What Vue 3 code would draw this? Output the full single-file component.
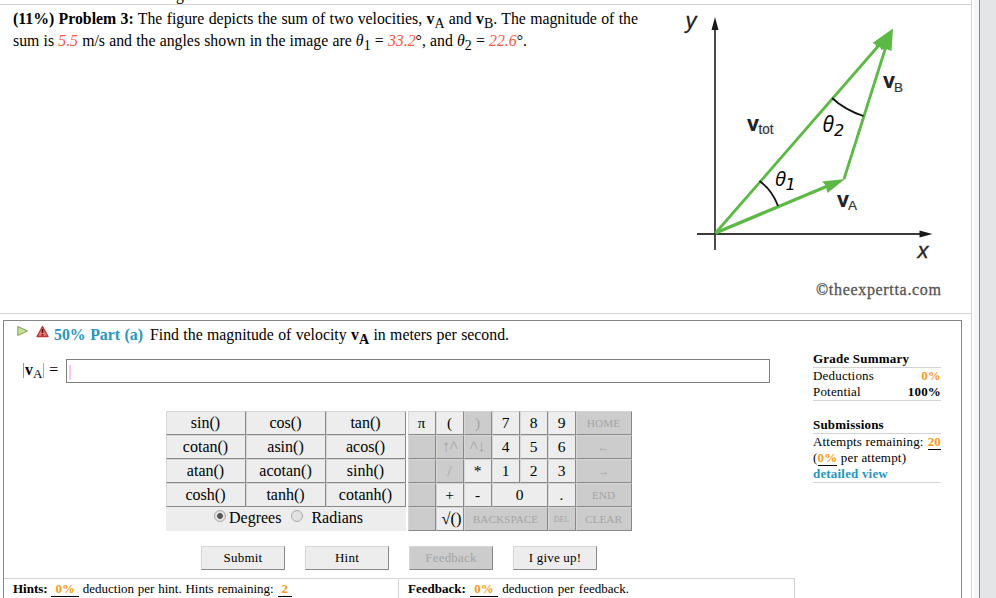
<script setup>
    import { ref } from 'vue'

    const answer = ref('')
    const unit = ref('deg')

    const functions = ['sin()', 'cos()', 'tan()', 'cotan()', 'asin()', 'acos()', 'atan()', 'acotan()', 'sinh()', 'cosh()', 'tanh()', 'cotanh()']

    const keys = [
        { label: 'π', cls: 'pi' }, { label: '(' }, { label: ')', off: true }, { label: '7' }, { label: '8' }, { label: '9' }, { label: 'HOME', off: true, cls: 'word' },
        { label: '', off: true }, { label: '↑^', off: true, cls: 'arrows' }, { label: '^↓', off: true, cls: 'arrows' }, { label: '4' }, { label: '5' }, { label: '6' }, { label: '←', off: true, cls: 'move' },
        { label: '', off: true }, { label: '/', off: true }, { label: '*' }, { label: '1' }, { label: '2' }, { label: '3' }, { label: '→', off: true, cls: 'move' },
        { label: '', off: true }, { label: '+' }, { label: '-' }, { label: '0', cls: 'zero' }, { label: '.' }, { label: 'END', off: true, cls: 'word' },
        { label: '', off: true }, { label: '√()', cls: 'root' }, { label: 'BACKSPACE', off: true, cls: 'word back' }, { label: 'DEL', off: true, cls: 'del' }, { label: 'CLEAR', off: true, cls: 'word' },
    ]

    function press(key) {
        if (!key.off) {
            answer.value += key.label
        }
    }
</script>

<template>
    <div class="page">
        <div class="sheet">
            <div class="previous"><span>g</span></div>
            <div class="problem">
                <div class="statement">
                    <p class="first"><b>(11%) Problem 3:</b> The figure depicts the sum of two velocities, <b>v</b><sub>A</sub> and <b>v</b><sub>B</sub>. The magnitude of the</p>
                    <p class="second">sum is <i class="val">5.5</i> m/s and the angles shown in the image are <i>θ</i><sub>1</sub> = <i class="val">33.2</i>°, and <i>θ</i><sub>2</sub> = <i class="val">22.6</i>°.</p>
                </div>
                <svg class="figure" width="301" height="308" viewBox="670 5 301 308">
                    <g stroke="#3a3a3a" stroke-width="1.8">
                        <path d="M715 28V250M697 234H922" />
                    </g>
                    <path d="M715 17L718.5 30H711.5ZM932.5 234L919.5 230.5V237.5Z" fill="#1a1a1a" />
                    <g stroke="#5cb946" fill="none">
                        <path d="M715.5 233L880 44" stroke-width="2.8" />
                        <path d="M715.5 233L830 185" stroke-width="3.4" />
                        <path d="M844 179L885.5 48" stroke-width="2.8" />
                    </g>
                    <path d="M893 28.500L872.500 43L875.500 44.500L876.500 48L880 47L881.500 50L885 48.500L891.500 51ZM845 179L822 181.500L825.500 185L827.500 193Z" fill="#5cb946" />
                    <path d="M759.500 181Q772 190 778 206M832 98Q845 110 863.500 116" fill="none" stroke="#111" stroke-width="1.8" />
                    <g class="axis">
                        <text x="685.500" y="27.500" font-size="22">y</text>
                        <text x="917.500" y="257.500" font-size="22">x</text>
                    </g>
                    <g class="vec">
                        <text x="747" y="131" font-size="21">v</text>
                        <text x="883" y="88" font-size="21">v</text>
                        <text x="837" y="206.500" font-size="21">v</text>
                    </g>
                    <g class="vecsub">
                        <text x="758.500" y="134" font-size="14" textLength="15" lengthAdjust="spacingAndGlyphs">tot</text>
                        <text x="894" y="92" font-size="13.500">B</text>
                        <text x="848" y="210" font-size="13.500">A</text>
                    </g>
                    <g class="theta">
                        <text x="775" y="185.500" font-size="20">θ</text>
                        <text class="num" x="785.500" y="190" font-size="16">1</text>
                        <text x="822.500" y="131.500" font-size="21">θ</text>
                        <text class="num" x="834" y="136" font-size="16">2</text>
                    </g>
                    <text class="credit" x="816" y="295" textLength="125">©theexpertta.com</text>
                </svg>
            </div>

            <div class="part">
                <div class="main">
                    <div class="title">
                        <svg class="play" width="12" height="12" viewBox="0 0 12 12">
                            <path d="M.8 1.500L10.500 6L.8 10.500Z" fill="#c6e29a" stroke="#7f9c5c" stroke-linejoin="round" />
                        </svg>
                        <svg class="warn" width="13" height="14" viewBox="0 0 13 14">
                            <path d="M6.500 1.500L12 11.500H1Z" fill="#f07878" stroke="#b63838" stroke-width="1.300" stroke-linejoin="round" />
                            <path d="M6.500 4V8M6.500 9V10.500" stroke="#4a1010" stroke-width="1.600" />
                        </svg>
                        <b class="name">50% Part (a)</b>
                        <span class="ask">Find the magnitude of velocity <b>v<sub>A</sub></b> in meters per second.</span>
                    </div>
                    <label class="answer">
                        <span class="lhs"><i class="bar"></i><b>v</b><sub>A</sub><i class="bar red"></i><em>=</em></span>
                        <span class="field"><i class="caret"></i><input type="text" v-model="answer"></span>
                    </label>
                    <div class="pads">
                        <div class="functions">
                            <button v-for="f in functions" :key="f" @click="answer += f">{{ f }}</button>
                            <div class="units">
                                <label><i class="radio" :class="{ on: unit === 'deg' }" @click="unit = 'deg'"></i>Degrees</label>
                                <label class="rad"><i class="radio" :class="{ on: unit === 'rad' }" @click="unit = 'rad'"></i>Radians</label>
                            </div>
                        </div>
                        <div class="keys">
                            <button v-for="(key, i) in keys" :key="i" :class="[key.cls, { off: key.off }]" @click="press(key)">{{ key.label }}</button>
                        </div>
                    </div>
                    <div class="actions">
                        <button>Submit</button>
                        <button>Hint</button>
                        <button class="off">Feedback</button>
                        <button>I give up!</button>
                    </div>
                    <div class="notes">
                        <p class="hints"><b>Hints:</b> <u>0%</u> deduction per hint. Hints remaining: <u>2</u></p>
                        <p class="feedback"><b>Feedback:</b> <u>0%</u> deduction per feedback.</p>
                    </div>
                </div>

                <div class="grades">
                    <h4>Grade Summary</h4>
                    <div class="rows">
                        <p><span>Deductions</span><b class="orange">0%</b></p>
                        <p><span>Potential</span><b>100%</b></p>
                    </div>
                    <h4 class="subs">Submissions</h4>
                    <div class="rows">
                        <p><span>Attempts remaining:</span><u>20</u></p>
                        <p class="per">(<u>0%</u><span>&nbsp;per attempt)</span></p>
                        <p><b class="link">detailed view</b></p>
                    </div>
                </div>
            </div>
        </div>
    </div>
</template>

<style>
body {
    margin: 0;
    overflow: hidden;
}
</style>

<style scoped>
.page {
    box-sizing: border-box;
    width: 996px;
    height: 598px;
    overflow: hidden;
    background: #fff;
    border-right: 16px solid #e4e5e7;
    font-family: "Liberation Serif", serif;
    font-size: 15.8px;
    color: #000;
}

.sheet {
    box-sizing: border-box;
    height: 598px;
    width: 980px;
    padding-right: 7px;
    border-right: 1px solid #888;
    background: linear-gradient(90deg, #fff 971px, #d3d3d3 971px, #d3d3d3 972px, #fff 972px, #fff 974px, #f5f5f5 974px);
}

p, h4 {
    margin: 0;
    white-space: nowrap;
}

sub {
    font-size: 14px;
    line-height: 0;
    vertical-align: -4px;
}

button {
    box-sizing: border-box;
    padding: 0;
    margin: 0;
    font-family: inherit;
    color: #000;
    background: #ededed;
    border: 1px solid;
    border-color: #d6d6d6 #888 #888 #d6d6d6;
    border-radius: 0;
}

button.off {
    background: #ccc;
    color: #a5a5a5;
}

.previous {
    height: 4px;
    overflow: hidden;
}

.previous span {
    display: block;
    margin: -13px 0 0 176px;
    line-height: 16px;
}

.problem {
    display: flex;
    width: 971px;
    height: 308px;
    border-top: 1px solid #d3d3d3;
    border-bottom: 1px solid #d3d3d3;
}

.statement {
    width: 657px;
    padding: 3px 0 0 13px;
    line-height: 22px;
}

.statement p {
    text-align-last: justify;
}

.first {
    width: 625px;
}

.second {
    width: 514px;
}

.val {
    color: #ff5540;
}

.axis {
    font-family: "Liberation Sans", sans-serif;
    font-style: italic;
    fill: #222;
    stroke: #222;
    stroke-width: .3;
}

.vec {
    font-family: "Open Sans", sans-serif;
    font-weight: bold;
    fill: #222;
}

.vecsub {
    font-family: "Liberation Sans", sans-serif;
    fill: #333;
    stroke: #333;
    stroke-width: .2;
}

.theta {
    font-family: "Open Sans", sans-serif;
    font-style: italic;
    fill: #000;
}

.num {
    font-family: "DejaVu Sans", sans-serif;
}

.credit {
    font-size: 16px;
    fill: #555;
    stroke: #555;
    stroke-width: .3;
}

.part {
    box-sizing: border-box;
    display: flex;
    width: 959px;
    height: 290px;
    margin: 6px 0 0 3px;
    border: 1px solid #888;
    border-bottom: 0;
}

.main {
    width: 791px;
}

.title {
    display: flex;
    height: 27px;
    padding-left: 13px;
    line-height: 28px;
}

.play {
    margin-top: 4px;
}

.warn {
    margin: 4px 0 0 7px;
}

.name {
    width: 89px;
    margin-left: 5px;
    color: #2497bf;
    text-align-last: justify;
    white-space: nowrap;
}

.ask {
    width: 359px;
    margin-left: 7px;
    text-align-last: justify;
    white-space: nowrap;
}

.answer {
    display: flex;
    height: 24px;
    margin-top: 11px;
}

.lhs {
    width: 43px;
    padding-left: 19px;
    display: flex;
    line-height: 22px;
}

.lhs sub {
    padding-top: 4px;
    line-height: 22px;
    font-size: 13px;
}

.lhs em {
    margin-left: 5px;
    font-style: normal;
}

.bar {
    width: 1px;
    height: 15px;
    margin: 4px 1px 0 0;
    background: #5ba9e0;
}

.bar.red {
    margin: 4px 0 0 1px;
    background: #dd987e;
}

.field {
    box-sizing: border-box;
    display: flex;
    width: 704px;
    height: 24px;
    border: 1px solid #808080;
}

.caret {
    width: 1px;
    height: 15px;
    margin: 5px 0 0 2px;
    border-right: 1px solid #ffc0ff;
    background: #ffd0b8;
}

input {
    flex: 1;
    min-width: 0;
    padding: 0;
    border: 0;
    outline: none;
    background: none;
    font: inherit;
}

.pads {
    display: flex;
    gap: 2px;
    margin: 28px 0 0 162px;
}

.functions {
    display: grid;
    grid-template-columns: repeat(3, 80px);
    grid-auto-rows: 24px;
    background: #ededed;
}

.functions button {
    padding-right: 1px;
    font-size: 16px;
}

.units {
    grid-column: span 3;
    display: flex;
    padding-left: 48px;
    line-height: 22px;
    font-size: 16px;
}

.units label {
    display: flex;
}

.units .rad {
    margin-left: 10px;
}

.radio {
    box-sizing: border-box;
    width: 12px;
    height: 12px;
    margin: 3px 3px 0 0;
    border: 1px solid #aaa;
    border-radius: 50%;
    background: #e2e2e2;
}

.rad .radio {
    margin-right: 8px;
}

.radio.on {
    background: radial-gradient(circle, #555 0 2.5px, #e4e4e4 3.3px);
}

.keys {
    display: grid;
    grid-template-columns: repeat(6, 28px) 56px;
    grid-auto-rows: 24px;
}

.keys button {
    padding-right: 1px;
    font-size: 15.5px;
    white-space: nowrap;
}

.keys .pi {
    font-size: 15px;
}

.keys .arrows {
    font-size: 17px;
    letter-spacing: -.5px;
}

.keys .word {
    font-size: 11.3px;
}

.keys .move {
    font-size: 12px;
}

.keys .root {
    padding: 0 0 0 3px;
    font-size: 16.5px;
}

.keys .zero {
    grid-column: span 2;
}

.keys .back {
    grid-column: span 3;
}

.keys .del {
    font-size: 8px;
}

.actions {
    display: flex;
    gap: 20px;
    margin: 15px 0 8px 197px;
}

.actions button {
    width: 84px;
    height: 24px;
    font-size: 13px;
    letter-spacing: .2px;
}

.notes {
    box-sizing: border-box;
    display: flex;
    width: 791px;
    height: 21px;
    border: 1px solid #d3d3d3;
    border-width: 1px 1px 0 0;
    font-size: 13px;
    line-height: 20px;
}

.hints {
    width: 279px;
    padding: 0 106px 0 9px;
    border-right: 1px solid #d3d3d3;
    text-align-last: justify;
}

.feedback {
    width: 221px;
    padding-left: 9px;
    text-align-last: justify;
}

u {
    font-weight: bold;
    color: #ff9a1a;
    text-decoration: none;
    border-bottom: 1px solid #000;
}

.notes u {
    padding: 0 4px;
}

.grades {
    width: 128px;
    margin: 29px 0 0 18px;
    font-size: 13px;
    letter-spacing: .18px;
}

h4 {
    box-sizing: border-box;
    height: 18px;
    border-bottom: 1px solid #d3d3d3;
    line-height: 17px;
    font-size: 13px;
    letter-spacing: .2px;
}

.subs {
    margin-top: 15px;
}

.rows {
    border-bottom: 1px solid #d3d3d3;
}

.rows p {
    display: flex;
    justify-content: space-between;
    height: 16px;
    line-height: 15px;
}

.rows u {
    height: 15px;
}

.rows .per {
    justify-content: flex-start;
}

.orange {
    color: #ff9a1a;
}

.link {
    color: #2497bf;
}
</style>
